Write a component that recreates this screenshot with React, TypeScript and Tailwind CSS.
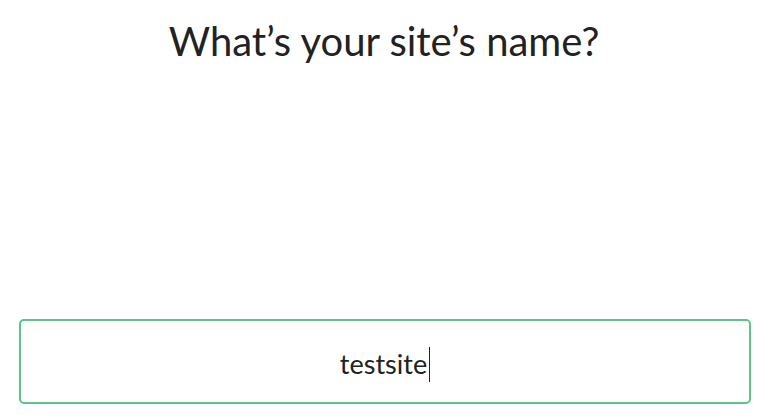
import React from "react";

export default function App() {
  return (
    <div className="w-[768px] h-[419px] bg-white flex flex-col">
      <h1 className="pt-[15px] text-center text-[40px] leading-[52px] text-[#222222] font-['Lato','Open_Sans',sans-serif] font-normal">
        What’s your site’s name?
      </h1>
      <div className="flex-1" />
      <div className="ml-[19px] w-[732px] mb-[15px] h-[85px] rounded-[5px] border-2 border-[#5cc486] flex items-center justify-center pt-[4px]">
        <span className="text-[27px] text-[#222222] font-['Lato','Open_Sans',sans-serif] leading-none">testsite</span>
        <span className="w-px h-[35px] bg-[#222222] ml-[2px] mt-[2px]" />
      </div>
    </div>
  );
}
